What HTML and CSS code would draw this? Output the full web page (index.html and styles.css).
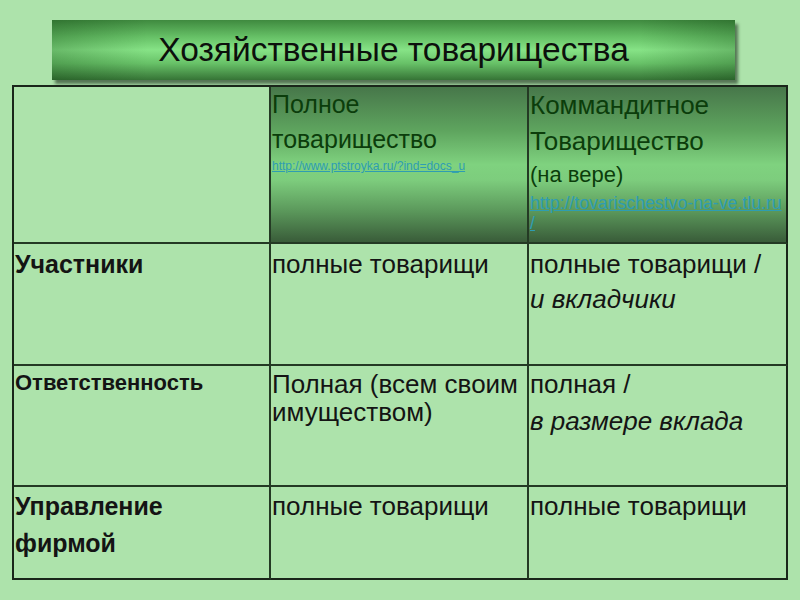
FILE: index.html
```html
<!DOCTYPE html>
<html lang="ru">
<head>
<meta charset="utf-8">
<title>Хозяйственные товарищества</title>
<link rel="stylesheet" href="styles.css">
</head>
<body>
<div class="slide">
  <h1 class="banner">Хозяйственные товарищества</h1>
  <div class="grid">
    <div class="cell head-empty"></div>
    <div class="cell head head-2">
      <div class="h-title">Полное товарищество</div>
      <a class="link link-small" href="#">http://www.ptstroyka.ru/?ind=docs_u</a>
    </div>
    <div class="cell head head-3">
      <div class="h-title2">Коммандитное</div>
      <div class="h-title2">Товарищество</div>
      <div class="h-sub">(на вере)</div>
      <a class="link link-big" href="#">http://tovarischestvo-na-ve.tlu.ru<br>/</a>
    </div>

    <div class="cell label r1">Участники</div>
    <div class="cell body r1">полные товарищи</div>
    <div class="cell body r1">полные товарищи /<br><i>и вкладчики</i></div>

    <div class="cell label label-small r2">Ответственность</div>
    <div class="cell body r2 tight">Полная (всем своим имуществом)</div>
    <div class="cell body r2 loose">полная /<br><i>в размере вклада</i></div>

    <div class="cell label r3">Управление фирмой</div>
    <div class="cell body r3 loose">полные товарищи</div>
    <div class="cell body r3 loose">полные товарищи</div>
  </div>
</div>
</body>
</html>
```

FILE: styles.css
```css
html, body {
  margin: 0;
  padding: 0;
}
body {
  width: 800px;
  height: 600px;
  background: #ade3ab;
  font-family: "Liberation Sans", Arial, sans-serif;
  overflow: hidden;
}
.slide {
  padding-top: 20px;
}
.banner {
  margin: 0 0 0 52px;
  width: 683px;
  height: 60px;
  line-height: 60px;
  text-align: center;
  font-size: 33.5px;
  font-weight: normal;
  color: #0c100c;
  background:
    linear-gradient(to right, rgba(0, 40, 0, 0.22), rgba(0, 40, 0, 0) 14%, rgba(0, 40, 0, 0) 86%, rgba(0, 40, 0, 0.22)),
    linear-gradient(to bottom, #3f8a3f 0%, #66c066 28%, #86e386 50%, #68c268 72%, #367436 100%);
  box-shadow: 3px 4px 3px rgba(40, 60, 40, 0.65);
}
.grid {
  margin: 5px 0 0 12px;
  display: grid;
  grid-template-columns: 257px 258px 259px;
  grid-template-rows: 157px 122px 121px 93px;
  width: 774px;
  border-top: 2px solid #1a261a;
  border-left: 2px solid #1a261a;
}
.cell {
  box-sizing: border-box;
  border-right: 2px solid #243a24;
  border-bottom: 2px solid #243a24;
  padding-left: 1px;
  color: #141414;
  font-size: 26px;
}
.cell:nth-child(3n) {
  border-right-color: #1a261a;
}
.grid .cell:nth-last-child(-n+3) {
  border-bottom-color: #1a261a;
}
.head {
  color: #0b3d0b;
  background: linear-gradient(to bottom, #47774a 0%, #5ea45e 28%, #7fd27f 50%, #7dcd7d 60%, #5b985b 80%, #395c39 100%);
}
.h-title {
  font-size: 25px;
  line-height: 35px;
}
.h-title2 {
  font-size: 26px;
  line-height: 36px;
}
.h-sub {
  font-size: 22px;
  line-height: 37px;
  margin-top: -3px;
}
.link {
  display: block;
  color: #2e9db2;
  text-decoration: underline;
  white-space: nowrap;
}
.link-small {
  font-size: 12px;
  line-height: 18px;
}
.link-big {
  font-size: 17.7px;
  line-height: 20px;
}
.label {
  font-weight: bold;
  font-size: 25px;
  line-height: 37px;
  padding-top: 1px;
}
.label.r1 {
  line-height: 35px;
  padding-top: 3px;
}
.label-small {
  font-size: 22px;
  line-height: 28px;
  padding-top: 3px;
}
.body {
  line-height: 35px;
  padding-top: 3px;
}
.body.tight {
  line-height: 28px;
  padding-top: 4px;
}
.body.loose {
  line-height: 37px;
  padding-top: 0;
}
.r3.body {
  padding-top: 1px;
}
```
